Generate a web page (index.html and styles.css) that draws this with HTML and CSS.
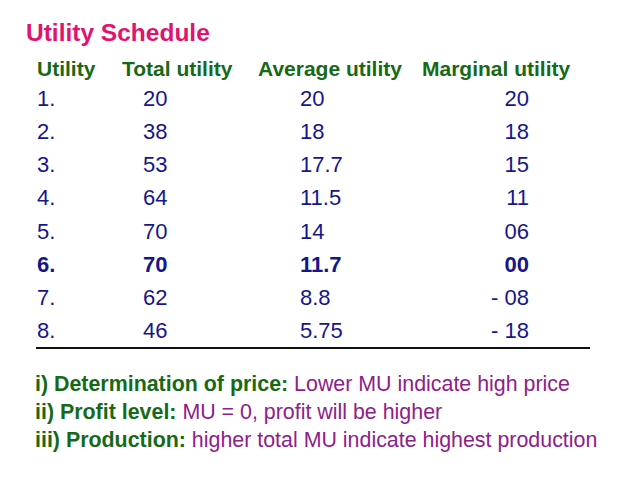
FILE: index.html
```html
<!DOCTYPE html>
<html lang="en">
<head>
<meta charset="utf-8">
<title>Utility Schedule</title>
<link rel="stylesheet" href="styles.css">
</head>
<body>
<main class="slide">
  <h1 class="title">Utility Schedule</h1>
  <div class="table">
    <div class="th">Utility</div>
    <div class="th">Total utility</div>
    <div class="th">Average utility</div>
    <div class="th">Marginal utility</div>

    <div class="td">1.</div><div class="td c2">20</div><div class="td c3">20</div><div class="td c4">20</div>
    <div class="td">2.</div><div class="td c2">38</div><div class="td c3">18</div><div class="td c4">18</div>
    <div class="td">3.</div><div class="td c2">53</div><div class="td c3">17.7</div><div class="td c4">15</div>
    <div class="td">4.</div><div class="td c2">64</div><div class="td c3">11.5</div><div class="td c4">11</div>
    <div class="td">5.</div><div class="td c2">70</div><div class="td c3">14</div><div class="td c4">06</div>
    <div class="td b">6.</div><div class="td b c2">70</div><div class="td b c3">11.7</div><div class="td b c4">00</div>
    <div class="td">7.</div><div class="td c2">62</div><div class="td c3">8.8</div><div class="td c4">- 08</div>
    <div class="td">8.</div><div class="td c2">46</div><div class="td c3">5.75</div><div class="td c4">- 18</div>
  </div>
  <div class="rule"></div>
  <ul class="notes">
    <li><strong>i) Determination of price:</strong> Lower MU indicate high price</li>
    <li><strong>ii) Profit level:</strong> MU = 0, profit will be higher</li>
    <li><strong>iii) Production:</strong> higher total MU indicate highest production</li>
  </ul>
</main>
</body>
</html>
```

FILE: styles.css
```css
html, body {
  margin: 0;
  padding: 0;
  background: #ffffff;
}

body {
  font-family: "Liberation Sans", Arial, sans-serif;
  width: 638px;
  height: 479px;
  overflow: hidden;
}

.slide {
  padding-top: 19px;
}

.title {
  margin: 0 0 9px 26px;
  font-size: 24.5px;
  line-height: 28px;
  font-weight: bold;
  color: #e0136e;
}

.table {
  display: grid;
  grid-template-columns: 85px 136px 164px 150px;
  margin-left: 37px;
}

.th {
  font-size: 21px;
  line-height: 26px;
  font-weight: bold;
  color: #166a16;
  white-space: nowrap;
}

.td {
  font-size: 22px;
  line-height: 33.14px;
  color: #16168c;
  white-space: nowrap;
}

.td.b {
  font-weight: bold;
}

.c2 {
  padding-left: 21px;
}

.c3 {
  padding-left: 42px;
}

.c4 {
  text-align: right;
  padding-right: 43px;
}

.rule {
  margin: 0 0 0 36px;
  width: 554px;
  height: 2px;
  background: #111111;
}

.notes {
  list-style: none;
  margin: 21px 0 0 35px;
  padding: 0;
  font-size: 21.4px;
  line-height: 28px;
  color: #8e208c;
  white-space: nowrap;
}

.notes strong {
  color: #166a16;
}
```
